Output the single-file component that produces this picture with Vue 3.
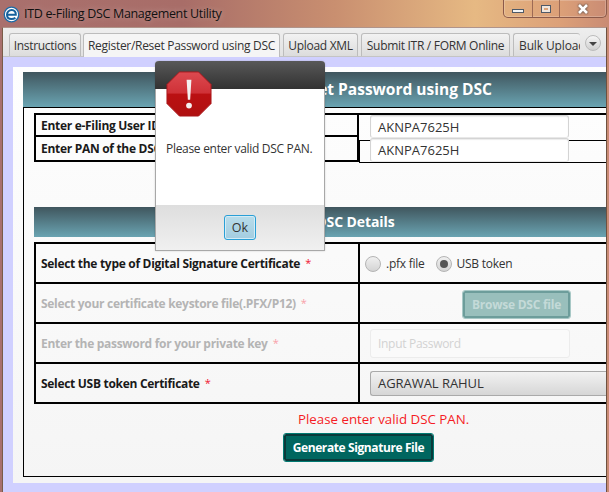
<script setup>
const tabs = [
  { label: 'Instructions', cls: 't1' },
  { label: 'Register/Reset Password using DSC', cls: 't2 active' },
  { label: 'Upload XML', cls: 't3' },
  { label: 'Submit ITR / FORM Online', cls: 't4' },
  { label: 'Bulk Upload', cls: 't5' }
]
</script>

<template>
  <div class="window">
    <header class="titlebar">
      <svg class="logo" width="17" height="18" viewBox="0 0 17 18">
        <ellipse cx="8.500" cy="9.500" rx="7.200" ry="7.400" fill="#fff" stroke="#1c6aa6" stroke-width="1.300" />
        <path d="M3.800 9.800h9c.2-3-1.400-4.800-4-4.800-2.900 0-4.800 2-4.800 4.800 0 2.700 1.800 4.200 4.500 4.200 1.500 0 2.800-.4 3.900-1.300" fill="none" stroke="#14609c" stroke-width="2" />
      </svg>
      <span class="title">ITD e-Filing DSC Management Utility</span>
      <div class="controls">
        <span class="ctl c-min"><i></i></span>
        <span class="ctl c-max"><i></i></span>
        <span class="ctl c-close">
          <svg width="12" height="10" viewBox="0 0 12 10"><path d="M2 1l8 8M10 1l-8 8" stroke="#fff" stroke-width="2.600" /></svg>
        </span>
      </div>
    </header>

    <main class="frame">
      <nav class="tabs">
        <div v-for="t in tabs" :key="t.label" class="tab" :class="t.cls"><span>{{ t.label }}</span></div>
        <div class="more"><i></i></div>
      </nav>

      <section class="content">
        <div class="panel">
          <h1 class="head1">Register/Reset Password using DSC</h1>
          <div class="box">
            <div class="top-table">
              <div class="cell lab first">Enter e-Filing User ID <em>*</em></div>
              <div class="cell val first"><div class="input">AKNPA7625H</div></div>
              <div class="cell lab second">Enter PAN of the DSC <em>*</em></div>
              <div class="cell val second"><div class="input">AKNPA7625H</div></div>
            </div>

            <h2 class="head2">Enter DSC Details</h2>

            <div class="table">
              <div class="row">
                <div class="l">Select the type of Digital Signature Certificate <em>*</em></div>
                <div class="r radios">
                  <span class="radio"></span><span class="rlabel">.pfx file</span>
                  <span class="radio on"><i></i></span><span class="rlabel">USB token</span>
                </div>
              </div>
              <div class="row">
                <div class="l dim">Select your certificate keystore file(.PFX/P12) <em>*</em></div>
                <div class="r browse-cell"><button class="browse" type="button">Browse DSC file</button></div>
              </div>
              <div class="row">
                <div class="l dim">Enter the password for your private key <em>*</em></div>
                <div class="r"><div class="pwd">Input Password</div></div>
              </div>
              <div class="row">
                <div class="l">Select USB token Certificate <em>*</em></div>
                <div class="r"><div class="select">AGRAWAL RAHUL</div></div>
              </div>
            </div>

            <p class="error">Please enter valid DSC PAN.</p>
            <div class="gen-wrap"><button class="gen" type="button">Generate Signature File</button></div>
          </div>
        </div>
      </section>
    </main>

    <div class="dialog">
      <div class="d-head"></div>
      <svg class="d-icon" width="46" height="46" viewBox="0 0 48 48">
        <defs>
          <linearGradient id="oct" x1="0" y1="0" x2="0" y2="1">
            <stop offset="0" stop-color="#dc4a50" />
            <stop offset="0.48" stop-color="#cf3137" />
            <stop offset="0.5" stop-color="#bb1012" />
            <stop offset="1" stop-color="#b01010" />
          </linearGradient>
        </defs>
        <polygon points="14,1 34,1 47,14 47,34 34,47 14,47 1,34 1,14" fill="url(#oct)" stroke="#a8181c" />
        <path d="M21.500 9h5l-1.300 21h-2.400z" fill="#f4f0f0" />
        <circle cx="24" cy="36" r="3" fill="#f4f0f0" />
      </svg>
      <div class="d-body">Please enter valid DSC PAN.</div>
      <div class="d-foot"><button class="ok" type="button">Ok</button></div>
    </div>
  </div>
</template>

<style>
html, body { margin: 0; padding: 0; overflow: hidden; }
</style>

<style scoped>
.window {
  position: relative;
  width: 609px;
  height: 492px;
  overflow: hidden;
  display: flex;
  flex-direction: column;
  font-family: "Open Sans", "Noto Sans", sans-serif;
  color: #2b2b2b;
  background: linear-gradient(90deg, #a9706d 0%, #a86d68 30%, #c98f70 55%, #e6b983 78%, #dca078 92%, #c98b74 100%);
}
.titlebar {
  height: 27px;
  flex: none;
  display: flex;
  align-items: center;
  padding-left: 3px;
  box-sizing: border-box;
}
.logo { flex: none; margin-top: 1px; }
.title {
  margin-left: 4px;
  font-size: 12.500px;
  letter-spacing: -.32px;
  color: #111;
  text-shadow: 0 0 6px rgba(255, 255, 255, .35);
}
.controls {
  margin-left: auto;
  margin-right: 2px;
  align-self: flex-start;
  height: 17px;
  display: flex;
  border: 1px solid #8c5a4a;
  border-top: 0;
  border-radius: 0 0 5px 5px;
  box-shadow: 0 0 0 1px rgba(255, 255, 255, .2) inset;
}
.ctl {
  display: flex;
  align-items: center;
  justify-content: center;
  border-left: 1px solid #9d6a55;
}
.c-min { width: 28px; border-left: 0; }
.c-max { width: 26px; }
.c-close { width: 46px; }
.c-min i { width: 10px; height: 2px; margin-top: 4px; background: #f4f4f4; border: 1px solid #4f5a68; display: block; }
.c-max i { width: 4px; height: 2px; border: 2px solid #f0e6dc; outline: 1px solid #4f5a68; display: block; }
.c-close svg { filter: drop-shadow(0 0 1px #333); }

.frame {
  flex: 1;
  min-height: 0;
  margin: 0 2px 0 2px;
  display: flex;
  flex-direction: column;
  border-top: 1px solid #b0948a;
  border-left: 1px solid #7a5c48;
  border-right: 1px solid #6f5040;
}
.tabs {
  height: 29px;
  flex: none;
  box-sizing: border-box;
  padding: 5px 0 0 6px;
  display: flex;
  background: linear-gradient(#eeeeee, #e2e2e2);
  border-bottom: 1px solid #c4c4c4;
  position: relative;
}
.tab {
  flex: none;
  height: 23px;
  box-sizing: border-box;
  border: 1px solid #bcbcbc;
  border-bottom: 0;
  border-radius: 3px 3px 0 0;
  background: linear-gradient(#f2f2f2, #dcdcdc);
  display: flex;
  align-items: center;
  justify-content: center;
  font-size: 12px;
  letter-spacing: -.3px;
  color: #333;
  white-space: nowrap;
  overflow: hidden;
}
.t1 { width: 72px; margin-right: 2px; }
.t2 { width: 197px; margin-right: 3px; }
.t3 { width: 75px; margin-right: 3px; }
.t4 { width: 149px; margin-right: 3px; }
.t5 { width: 67px; justify-content: flex-start; padding-left: 5px; border-right: 0; letter-spacing: -.12px; }
.active { background: #f5f5f5; height: 24px; }
.more {
  position: absolute;
  right: 5px;
  top: 7px;
  width: 16px;
  height: 16px;
  box-sizing: border-box;
  border-radius: 50%;
  border: 1px solid #bbb;
  background: linear-gradient(#f6f6f6, #cfcfcf);
  display: flex;
  align-items: center;
  justify-content: center;
}
.more i {
  width: 0;
  height: 0;
  border-left: 4px solid transparent;
  border-right: 4px solid transparent;
  border-top: 4px solid #444;
  margin-top: 1px;
}
.content {
  flex: 1;
  min-height: 0;
  background: #d0d0ff;
  padding: 10px 0 0 10px;
}
.panel {
  background: linear-gradient(#fefefe, #f5f5f5);
  height: 416px;
  padding: 5px 0 0 10px;
  box-sizing: border-box;
}
.head1 {
  margin: 0;
  height: 35px;
  line-height: 35px;
  text-align: center;
  padding-left: 84px;
  color: #fff;
  font-size: 15.500px;
  font-weight: 700;
  background: linear-gradient(#40565e, #6aa4b2);
}
.box {
  border-top: 1px solid #000;
  border-left: 1px solid #000;
  border-bottom: 1px solid #000;
  height: 370px;
  box-sizing: border-box;
  padding: 5px 0 0 10px;
}
.top-table {
  display: grid;
  grid-template-columns: 325px 1fr;
  grid-template-rows: 24px 25px;
  height: 50px;
  font-size: 12px;
  letter-spacing: -.3px;
}
.cell { box-sizing: border-box; }
.lab {
  font-weight: 700;
  color: #1a1a1a;
  border-left: 2px solid #000;
  border-right: 2px solid #000;
  padding-left: 5px;
  display: flex;
  align-items: center;
  white-space: nowrap;
  overflow: hidden;
}
.lab.first { border-top: 2px solid #000; border-bottom: 2px solid #000; }
.lab.second { border-bottom: 2px solid #000; }
.val.first { border-top: 2px solid #000; }
.val.second { border-top: 1px solid #000; border-bottom: 1px solid #000; margin-top: 3px; height: 23px; border-left: 1px solid #000; }
.val { position: relative; padding-left: 10px; }
.input {
  position: absolute;
  left: 11px;
  top: 0;
  width: 199px;
  height: 23px;
  box-sizing: border-box;
  padding-left: 7px;
  background: #fff;
  border: 1px solid #d4d4d4;
  border-bottom-color: #e8e8e8;
  border-radius: 3px;
  font-size: 13px;
  letter-spacing: 0;
  color: #333;
  line-height: 22px;
  box-shadow: inset 0 1px 1px rgba(0, 0, 0, .08);
}
.val.second .input { top: -3px; left: 10px; height: 24px; }
em { font-style: normal; font-size: 11px; color: #f01530; font-weight: 400; margin-left: 5px; position: relative; top: -1px; }
.head2 {
  margin: 44px 0 0 0;
  height: 30px;
  line-height: 30px;
  text-align: center;
  padding-left: 30px;
  color: #fff;
  font-size: 14px;
  font-weight: 700;
  letter-spacing: -.1px;
  background: linear-gradient(#40565e, #6aa4b2);
}
.table {
  margin-top: 5px;
  border-top: 2px solid #000;
  border-left: 2px solid #000;
  height: 162px;
  box-sizing: border-box;
  font-size: 12px;
}
.row {
  display: grid;
  grid-template-columns: 324px 1fr;
  height: 40px;
  border-bottom: 2px solid #000;
  box-sizing: border-box;
}
.l {
  padding: 1px 0 0 5px;
  display: flex;
  align-items: center;
  font-weight: 700;
  letter-spacing: -.3px;
  color: #1a1a1a;
  border-right: 2px solid #000;
  white-space: nowrap;
}
.l.dim { color: #b4b4b4; }
.l.dim em { color: #f8a0a8; }
.r {
  display: flex;
  align-items: center;
  padding-left: 10px;
  min-width: 0;
}
.radios { padding: 1px 0 0 5px; font-size: 12px; font-weight: 400; }
.radio {
  width: 16px;
  height: 16px;
  box-sizing: border-box;
  border-radius: 50%;
  border: 1px solid #b4b4b4;
  background: linear-gradient(#f0f0f0, #d4d4d4);
  display: flex;
  align-items: center;
  justify-content: center;
  margin-right: 5px;
}
.radio i { width: 8px; height: 8px; border-radius: 50%; background: #555; }
.rlabel { margin-right: 11px; color: #333; letter-spacing: -.25px; }
.browse-cell { padding-left: 103px; }
.browse {
  width: 107px;
  height: 27px;
  margin-top: 2px;
  padding: 0;
  border: 2px solid #6d9d9b;
  outline: 1px solid #a8c8c6;
  border-radius: 2px;
  background: #99bfbc;
  color: #c4dad8;
  font: 700 12px "Open Sans", "Noto Sans", sans-serif;
  letter-spacing: -.25px;
  white-space: nowrap;
}
.pwd {
  width: 200px;
  height: 29px;
  box-sizing: border-box;
  border: 1px solid #ececec;
  border-radius: 3px;
  background: #fafafa;
  padding-left: 7px;
  line-height: 27px;
  font-size: 12px;
  letter-spacing: -.3px;
  color: #d2d2d2;
}
.select {
  width: 240px;
  height: 25px;
  box-sizing: border-box;
  border: 1px solid #aaa;
  border-right: 0;
  border-radius: 3px 0 0 3px;
  background: linear-gradient(#f2f2f2, #d6d6d6);
  padding-left: 7px;
  line-height: 22px;
  font-size: 13px;
  letter-spacing: -.05px;
  color: #333;
}
.error {
  margin: 6px 0 0 0;
  height: 19px;
  line-height: 19px;
  padding-left: 264px;
  font-size: 13.300px;
  color: #f51c25;
  white-space: nowrap;
}
.gen-wrap { margin-top: 5px; padding-left: 250px; }
.gen {
  display: block;
  width: 149px;
  height: 27px;
  padding: 0;
  border: 2px solid #0a3a3a;
  outline: 1px solid #007a72;
  border-radius: 2px;
  background: #00665f;
  color: #fff;
  font: 700 12px "Open Sans", "Noto Sans", sans-serif;
  letter-spacing: -.4px;
  white-space: nowrap;
}
.dialog {
  position: absolute;
  left: 155px;
  top: 61px;
  width: 170px;
  height: 190px;
  box-sizing: border-box;
  border: 1px solid #a8a8a8;
  border-top: 0;
  border-radius: 4px 4px 0 0;
  display: flex;
  flex-direction: column;
  background: #fff;
  box-shadow: 0 0 2px rgba(0, 0, 0, .2);
}
.d-head {
  height: 28px;
  flex: none;
  border-radius: 4px 4px 0 0;
  margin: 0 -1px;
  background: linear-gradient(#585858, #323232);
}
.d-icon { position: absolute; left: 10px; top: 10px; }
.d-body {
  flex: 1;
  padding: 51px 0 0 10px;
  font-size: 12px;
  letter-spacing: -.3px;
  color: #333;
  white-space: nowrap;
}
.d-foot {
  height: 45px;
  flex: none;
  display: flex;
  justify-content: center;
  padding-top: 10px;
  box-sizing: border-box;
  background: linear-gradient(#dedede, #f0f0f0);
}
.ok {
  width: 32px;
  height: 25px;
  padding: 0;
  border: 1px solid #2a9fd6;
  border-radius: 3px;
  background: linear-gradient(#b8dcea, #a4cde0);
  color: #333;
  font: 400 12.500px "Open Sans", "Noto Sans", sans-serif;
  box-shadow: inset 0 0 0 1px #d4ecf6;
}
</style>
